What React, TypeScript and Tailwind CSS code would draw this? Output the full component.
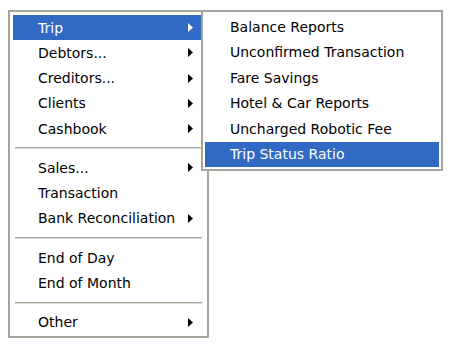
import React from "react";

type Item = { label: string; arrow?: boolean; active?: boolean } | "sep";

const mainItems: Item[] = [
  { label: "Trip", arrow: true, active: true },
  { label: "Debtors...", arrow: true },
  { label: "Creditors...", arrow: true },
  { label: "Clients", arrow: true },
  { label: "Cashbook", arrow: true },
  "sep",
  { label: "Sales...", arrow: true },
  { label: "Transaction" },
  { label: "Bank Reconciliation", arrow: true },
  "sep",
  { label: "End of Day" },
  { label: "End of Month" },
  "sep",
  { label: "Other", arrow: true },
];

const subItems: Item[] = [
  { label: "Balance Reports" },
  { label: "Unconfirmed Transaction" },
  { label: "Fare Savings" },
  { label: "Hotel & Car Reports" },
  { label: "Uncharged Robotic Fee" },
  { label: "Trip Status Ratio", active: true },
];

function Arrow({ white }: { white?: boolean }) {
  return (
    <svg width="5" height="9" viewBox="0 0 5 9" className="block">
      <polygon points="0,0 5,4.5 0,9" fill={white ? "#ffffff" : "#000000"} />
    </svg>
  );
}

function Row({ item, h }: { item: Exclude<Item, "sep">; h: string }) {
  return (
    <div
      className={`flex items-center justify-between pl-[25px] pr-[11px] ${h} ${
        item.active ? "bg-[#316ac5] text-white" : "text-black"
      }`}
    >
      <span className="whitespace-nowrap">{item.label}</span>
      {item.arrow && <Arrow white={item.active} />}
    </div>
  );
}

export default function App() {
  return (
    <div
      className="relative w-[451px] h-[347px] bg-white overflow-hidden text-[14px] leading-none"
      style={{ fontFamily: '"DejaVu Sans", Verdana, sans-serif' }}
    >
      <div className="ml-[8px] mt-[10px] w-[201px] border-2 border-[#a7a69d] bg-white px-[3px] pt-[3px] pb-[1.5px]">
        {mainItems.map((it, i) =>
          it === "sep" ? (
            <div key={i} className="h-[14px] flex flex-col justify-center px-[2px]">
              <div className="h-px bg-[#a7a69d]" />
              <div className="h-px bg-[#dcdbd4]" />
            </div>
          ) : (
            <Row key={i} item={it} h="h-[25.25px]" />
          )
        )}
      </div>
      <div className="absolute left-[201px] top-[10px] w-[242px] border-2 border-[#a7a69d] bg-white px-[2px] pt-[2px] pb-[2px]">
        {subItems.map((it, i) =>
          it === "sep" ? null : <Row key={i} item={it} h="h-[25.5px]" />
        )}
      </div>
    </div>
  );
}
